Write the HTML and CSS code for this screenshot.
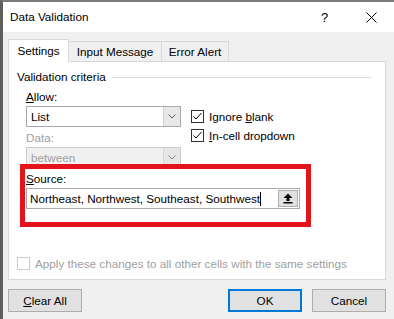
FILE: index.html
```html
<!DOCTYPE html>
<html lang="en">
<head>
  <meta charset="UTF-8">
  <title>Data Validation</title>
  <link rel="stylesheet" href="styles.css">
</head>
<body>
<div class="window">
  <div class="titlebar">
    <span class="title">Data Validation</span>
    <span class="help">?</span>
    <span class="close">
      <svg width="11" height="11" viewBox="0 0 11 11"><path d="M0.5 0.5L10.5 10.5M10.5 0.5L0.5 10.5" stroke="#000" stroke-width="1"/></svg>
    </span>
  </div>

  <div class="dialog-body">
    <div class="tabs">
      <div class="tab active">Settings</div>
      <div class="tab tab-input">Input Message</div>
      <div class="tab tab-error">Error Alert</div>
    </div>

    <div class="panel">
      <div class="legend">
        <span>Validation criteria</span>
        <span class="legend-line"></span>
      </div>

      <div class="criteria">
        <div class="label"><u>A</u>llow:</div>
        <div class="criteria-row">
          <div class="left-col">
            <div class="combo">
              <span class="combo-text">List</span>
              <span class="combo-btn">
                <svg width="8" height="5" viewBox="0 0 8 5"><path d="M0.5 0.5L4 4L7.5 0.5" fill="none" stroke="#606060" stroke-width="1"/></svg>
              </span>
            </div>
            <div class="label disabled data-label">Data:</div>
            <div class="combo combo-disabled">
              <span class="combo-text">between</span>
              <span class="combo-btn">
                <svg width="8" height="5" viewBox="0 0 8 5"><path d="M0.5 0.5L4 4L7.5 0.5" fill="none" stroke="#808080" stroke-width="1"/></svg>
              </span>
            </div>
          </div>
          <div class="checks">
            <div class="check-row">
              <span class="checkbox checked">
                <svg width="11" height="11" viewBox="0 0 11 11"><path d="M1.5 5.5L4 8L9.5 2" fill="none" stroke="#000" stroke-width="1"/></svg>
              </span>
              <span>Ignore <u>b</u>lank</span>
            </div>
            <div class="check-row">
              <span class="checkbox checked">
                <svg width="11" height="11" viewBox="0 0 11 11"><path d="M1.5 5.5L4 8L9.5 2" fill="none" stroke="#000" stroke-width="1"/></svg>
              </span>
              <span><u>I</u>n-cell dropdown</span>
            </div>
          </div>
        </div>

        <div class="label source-label"><u>S</u>ource:</div>
        <div class="source-input">
          <span class="source-text">Northeast, Northwest, Southeast, Southwest</span>
          <span class="caret"></span>
          <span class="ref-btn">
            <svg width="10" height="11" viewBox="0 0 10 11"><path d="M5 0.5L9.5 5H6.5V8H3.5V5H0.5Z" fill="#000"/><rect x="0.5" y="9" width="9" height="1.5" fill="#000"/></svg>
          </span>
        </div>
      </div>

      <div class="apply-row">
        <span class="checkbox disabled-box"></span>
        <span class="disabled">Apply these changes to all other cells with the same settings</span>
      </div>
    </div>

    <div class="buttons">
      <button class="btn"><u>C</u>lear All</button>
      <span class="spacer"></span>
      <button class="btn btn-default">OK</button>
      <button class="btn">Cancel</button>
    </div>
  </div>

  <div class="highlight"></div>
</div>
</body>
</html>
```

FILE: styles.css
```css
body {
  margin: 0;
  background: #fff;
  font-family: 'Liberation Sans', Arial, sans-serif;
  font-size: 11.7px;
  color: #000;
}

.window {
  position: relative;
  width: 391px;
  height: 317px;
  border-top: 2px solid #7a7a7a;
  border-left: 3px solid #5f5f5f;
  background: #f0f0f0;
}

.titlebar {
  height: 30px;
  background: #fff;
  display: flex;
  align-items: center;
  padding-left: 7px;
}

.title {
  flex: 1;
  padding-bottom: 1px;
}

.help {
  width: 10px;
  font-size: 13px;
  margin-right: 35px;
}

.close {
  display: flex;
  margin-right: 17px;
}

.dialog-body {
  padding: 7px 8px 0 5px;
}

.tabs {
  display: flex;
  align-items: flex-end;
  height: 22px;
}

.tab {
  box-sizing: border-box;
  height: 20px;
  border: 1px solid #d9d9d9;
  border-bottom: none;
  border-left: none;
  background: #f0f0f0;
  display: flex;
  align-items: center;
  justify-content: center;
}

.tab.active {
  position: relative;
  z-index: 1;
  width: 61px;
  height: 23px;
  margin-bottom: -1px;
  background: #fff;
  border-left: 1px solid #d9d9d9;
  padding-bottom: 2px;
}

.tab-input { width: 93px; }
.tab-error { width: 67px; }

.panel {
  box-sizing: border-box;
  height: 219px;
  border: 1px solid #d9d9d9;
  background: #fff;
  padding: 7px 8px 9px 8px;
  display: flex;
  flex-direction: column;
}

.legend {
  display: flex;
  align-items: center;
  height: 16px;
  line-height: 16px;
}

.legend-line {
  flex: 1;
  height: 1px;
  background: #dcdcdc;
  margin: 1px 6px 0 6px;
}

.criteria {
  padding-left: 9px;
}

.label {
  height: 16px;
  line-height: 16px;
  margin-top: 4px;
}

.disabled { color: #a0a0a0; }

.criteria-row {
  display: flex;
  margin-top: 1px;
}

.left-col {
  width: 155px;
}

.data-label {
  margin-top: 3px;
}

.combo {
  box-sizing: border-box;
  height: 21px;
  border: 1px solid #a9a9a9;
  display: flex;
  align-items: stretch;
}

.combo-text {
  flex: 1;
  padding-left: 4px;
  display: flex;
  align-items: center;
}

.combo-btn {
  width: 16px;
  background: #e8e8e8;
  border-left: 1px solid #d0d0d0;
  display: flex;
  align-items: center;
  justify-content: center;
}

.combo-disabled {
  height: 20px;
  margin-top: 1px;
  border-color: #cccccc;
  background: #f0f0f0;
  color: #a0a0a0;
}

.combo-disabled .combo-btn {
  background: #e6e6e6;
  border-left-color: #d6d6d6;
}

.checks {
  margin-left: 10px;
  padding-top: 1px;
}

.check-row {
  display: flex;
  align-items: center;
  height: 19px;
}

.checkbox {
  box-sizing: border-box;
  width: 13px;
  height: 13px;
  border: 1px solid #333;
  background: #fff;
  display: flex;
  margin-right: 5px;
}

.disabled-box {
  border-color: #cccccc;
}

.source-label {
  margin-top: 4px;
}

.source-input {
  box-sizing: border-box;
  width: 274px;
  height: 21px;
  margin-top: 1px;
  border: 1px solid #a9a9a9;
  display: flex;
  align-items: center;
  padding-left: 3px;
}

.source-text {
  white-space: nowrap;
}

.caret {
  width: 1px;
  height: 14px;
  background: #000;
}

.ref-btn {
  box-sizing: border-box;
  margin-left: auto;
  margin-right: 1px;
  width: 20px;
  height: 17px;
  background: #e1e1e1;
  border: 1px solid #adadad;
  display: flex;
  align-items: center;
  justify-content: center;
}

.apply-row {
  margin-top: auto;
  display: flex;
  align-items: center;
  height: 13px;
}

.apply-row .checkbox {
  margin-right: 5px;
}

.buttons {
  display: flex;
  margin-top: 9px;
  gap: 10px;
}

.spacer { flex: 1; }

.btn {
  box-sizing: border-box;
  width: 74px;
  height: 23px;
  background: #e1e1e1;
  border: 1px solid #adadad;
  font-family: inherit;
  font-size: 11.7px;
  color: #000;
  padding: 0;
}

.btn-default {
  border: 2px solid #0078d7;
}

.highlight {
  position: absolute;
  left: 17px;
  top: 162px;
  width: 291px;
  height: 63px;
  box-sizing: border-box;
  border: 5px solid #e3141c;
}
```
